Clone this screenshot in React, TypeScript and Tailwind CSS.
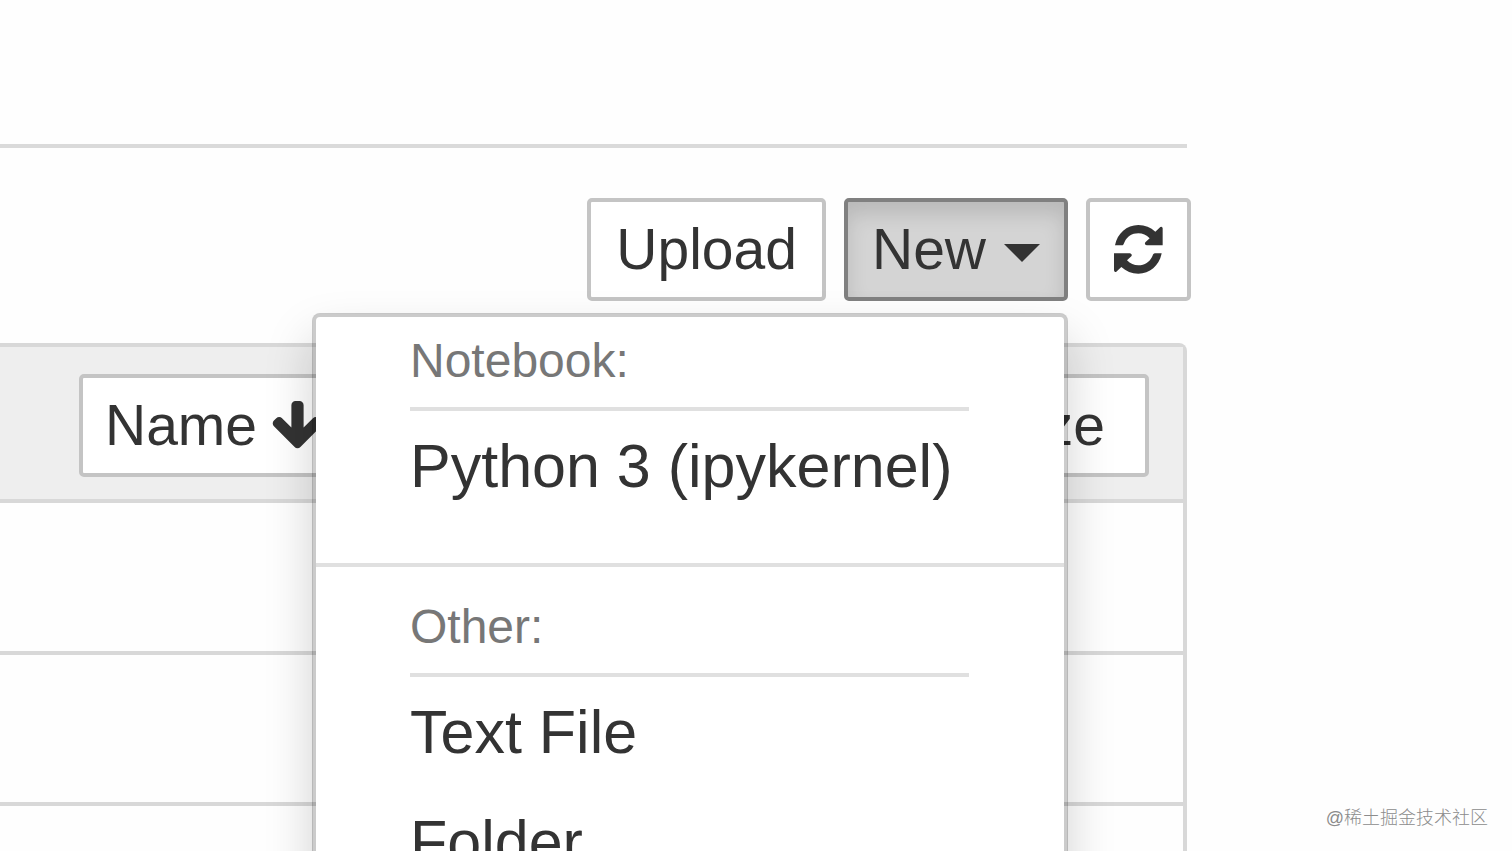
import type { ReactNode } from "react";

const refreshHalf =
  "M105 158C112 122 140 97 175 97C195 97 212 104 226 117L241 103Q247 100 248 107V158H200Q192 156 196 149L209 137C199 127 188 122 175 122C155 122 142 132 134 147C131 154 130 158 125 158Z";

function RefreshIcon() {
  return (
    <svg viewBox="90 85 171 171" className="h-[57px] w-[57px] shrink-0 fill-current" aria-hidden="true">
      <path d={refreshHalf} />
      <path d={refreshHalf} transform="rotate(180 175 170)" />
    </svg>
  );
}

function ArrowDownIcon() {
  return (
    <svg viewBox="0 0 1792 1792" className="h-[57px] w-[57px] shrink-0 fill-current" aria-hidden="true">
      <path d="M1675 832q0 53-37 90l-651 652q-39 37-91 37-53 0-90-37l-651-652q-38-36-38-90 0-53 38-91l74-75q39-37 91-37 53 0 90 37l294 294v-704q0-52 38-90t90-38h128q52 0 90 38t38 90v704l294-294q37-37 90-37 52 0 91 37l75 75q37 39 37 91z" />
    </svg>
  );
}

function CaretIcon() {
  return (
    <svg viewBox="0 0 36 18" className="mt-2 h-[18px] w-9 shrink-0 fill-current" aria-hidden="true">
      <path d="M0 0h36L18 18z" />
    </svg>
  );
}

const buttonBase =
  "flex h-[103px] items-center rounded-[5px] border-4 pb-px text-[57px] leading-[80px] whitespace-nowrap";
const plainButton = buttonBase + " border-[#c4c4c4] bg-white";

function MenuSection({ title, children }: { title: string; children: ReactNode }) {
  return (
    <section className="pr-[95px] pl-[94px]">
      <h2 className="border-b-4 border-[#e0e0e0] pb-3 text-[48px] leading-[68px] text-[#777777]">{title}</h2>
      <ul>{children}</ul>
    </section>
  );
}

function MenuItem({ label }: { label: string }) {
  return (
    <li className="py-3">
      <a href="#" className="block text-[61px] leading-[86px] whitespace-nowrap text-[#333333]">
        {label}
      </a>
    </li>
  );
}

function NewMenu() {
  return (
    <div className="absolute top-full right-0 z-10 mt-3 w-[756px] rounded-lg border-4 border-black/20 bg-white bg-clip-padding pt-2.5 pb-6 shadow-[0_24px_48px_rgba(0,0,0,0.175)]">
      <MenuSection title="Notebook:">
        <MenuItem label="Python 3 (ipykernel)" />
      </MenuSection>
      <hr className="mt-[42px] mb-[26px] border-t-4 border-[#e0e0e0]" />
      <MenuSection title="Other:">
        <MenuItem label="Text File" />
        <MenuItem label="Folder" />
      </MenuSection>
    </div>
  );
}

export default function App() {
  return (
    <main className="relative h-screen overflow-hidden bg-[#fefefe] pr-[325px] font-['Liberation_Sans',Arial,sans-serif] text-[#333333]">
      <div className="h-[148px] border-b-4 border-[#dadada]" />

      <div className="-mr-1 flex justify-end gap-[18px] pt-[50px] pb-[42px]">
        <button type="button" className={plainButton + " px-[25px]"}>
          Upload
        </button>
        <div className="relative">
          <button
            type="button"
            aria-expanded="true"
            className={
              buttonBase +
              " gap-[18px] border-[#808080] bg-[#d4d4d4] px-6 shadow-[inset_0_12px_20px_rgba(0,0,0,0.125)]"
            }
          >
            New
            <CaretIcon />
          </button>
          <NewMenu />
        </div>
        <button type="button" aria-label="Refresh" className={plainButton + " px-5"}>
          <RefreshIcon />
        </button>
      </div>

      <div className="rounded-tr-lg border-4 border-l-0 border-[#d8d8d8]">
        <div className="flex justify-between border-b-4 border-[#d8d8d8] bg-[#eeeeee] pt-[27px] pr-[34px] pb-[22px] pl-[79px]">
          <button type="button" className={plainButton + " gap-3 px-[22px]"}>
            Name
            <ArrowDownIcon />
          </button>
          <button type="button" className={plainButton + " pr-10 pl-[22px]"}>
            Size
          </button>
        </div>
        <div className="h-[152px] border-b-4 border-[#d8d8d8]" />
        <div className="h-[151px] border-b-4 border-[#d8d8d8]" />
        <div className="h-[151px] border-b-4 border-[#d8d8d8]" />
      </div>

      <p className="absolute right-6 bottom-5 text-[18px] leading-[26px] font-light text-[#8c8c8c] [font-family:'Liberation_Sans','Noto_Sans_CJK_SC',sans-serif]">
        @稀土掘金技术社区
      </p>
    </main>
  );
}
